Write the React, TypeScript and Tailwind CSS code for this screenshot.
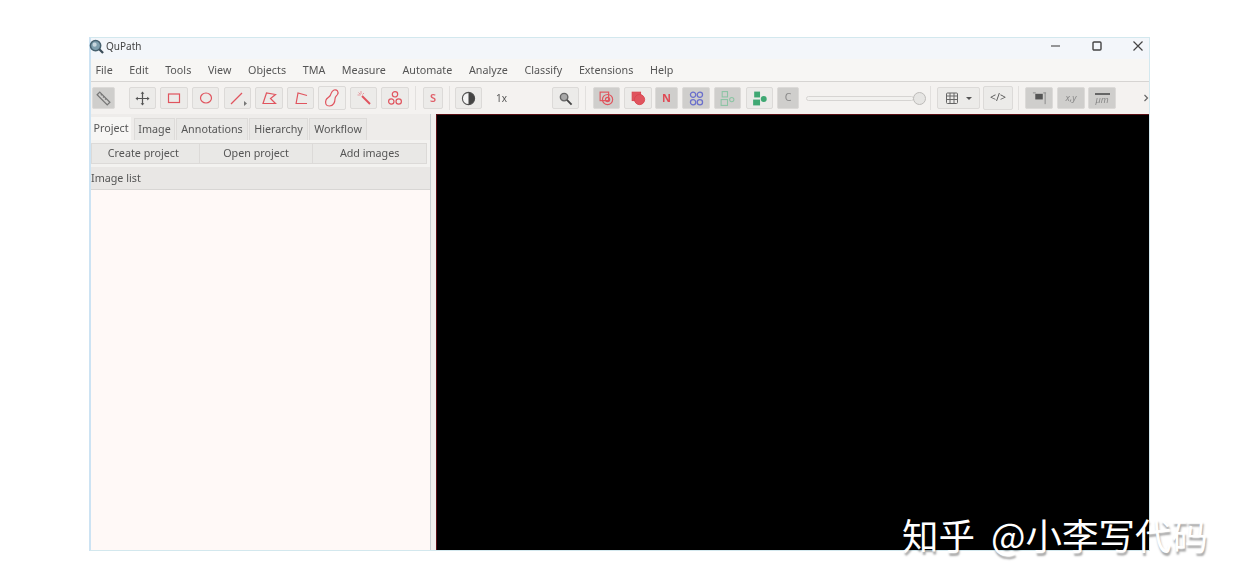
import type { ReactNode } from 'react';

const RED = '#e0545e';

interface ToolButtonProps {
  className?: string;
  selected?: boolean;
  children: ReactNode;
}

function ToolButton({ className = '', selected = false, children }: ToolButtonProps) {
  return (
    <div
      className={`flex h-[22px] shrink-0 items-center justify-center rounded-[2px] border border-[#dcdad8] ${
        selected ? 'bg-[#cfcecc]' : 'bg-[#ecebe9]'
      } ${className}`}
    >
      {children}
    </div>
  );
}

function Glyph({ children, size = 16 }: { children: ReactNode; size?: number }) {
  return (
    <svg width={size} height={size} viewBox="0 0 16 16" fill="none" stroke={RED} strokeWidth="1.2">
      {children}
    </svg>
  );
}

function Divider({ className = '' }: { className?: string }) {
  return <div className={`h-[24px] w-px shrink-0 bg-[#e2e0de] ${className}`} />;
}

const menus = [
  'File',
  'Edit',
  'Tools',
  'View',
  'Objects',
  'TMA',
  'Measure',
  'Automate',
  'Analyze',
  'Classify',
  'Extensions',
  'Help',
];

export default function App() {
  return (
    <div className="relative h-[588px] w-[1239px] overflow-hidden bg-white pl-[89px] pt-[37px] font-['Noto_Sans','Open_Sans',sans-serif] text-[10.75px] text-[#555]">
      {/* Window */}
      <div className="flex h-[514px] w-[1061px] flex-col border-y border-l-2 border-r border-[#d3e8ee] border-l-[#cde3f3] bg-[#f4f2f0] blur-[0.35px]">
        {/* Title bar */}
        <div className="flex h-[21px] shrink-0 items-start bg-[#f3f6fa] pr-[5px] pt-[1px]">
          <svg width="15" height="15" viewBox="0 0 16 16" className="ml-[-2px]">
            <circle cx="7" cy="7" r="5.5" fill="#7f9fae" stroke="#46606e" strokeWidth="1.6" />
            <circle cx="6" cy="6" r="2.2" fill="#c9d8df" />
            <path d="M11 11l4 4" stroke="#3a4c58" strokeWidth="2.4" />
          </svg>
          <span className="ml-[2px] text-[10px] leading-[14px] text-[#444]">QuPath</span>
          <div className="ml-auto flex items-center pt-[1px]">
            <svg width="12" height="12" viewBox="0 0 12 12" stroke="#555" strokeWidth="1.2">
              <path d="M1 6h9" />
            </svg>
            <svg width="12" height="12" viewBox="0 0 12 12" fill="none" stroke="#444" strokeWidth="1.4" className="ml-[29px]">
              <rect x="2" y="2" width="8" height="8" rx="1" />
            </svg>
            <svg width="12" height="12" viewBox="0 0 12 12" stroke="#444" strokeWidth="1.2" className="ml-[29px]">
              <path d="M1.5 1.5l9 9M10.5 1.5l-9 9" />
            </svg>
          </div>
        </div>

        {/* Menu bar */}
        <div className="flex h-[23px] shrink-0 items-center gap-[16.6px] border-b border-[#d6d4d2] bg-[#f7f6f4] pl-[4.5px]">
          {menus.map((menu) => (
            <span key={menu}>{menu}</span>
          ))}
        </div>

        {/* Toolbar */}
        <div className="flex h-[32px] shrink-0 items-center bg-[#f4f2f0] pl-[1px]">
          <ToolButton selected className="w-[23px]">
            <svg width="17" height="17" viewBox="0 0 16 16" fill="none" stroke="#777" strokeWidth="1.2">
              <path d="M4.5 2L14 11.5 11.5 14 2 4.500z" />
              <path d="M6.500 4l-1 1M8.500 6l-1 1M10.500 8l-1 1" />
            </svg>
          </ToolButton>
          <ToolButton className="ml-[14px] w-[27px]">
            <svg width="15" height="15" viewBox="0 0 16 16" fill="#555" stroke="#555" strokeWidth="1.300">
              <path d="M8 2v12M2 8h12" />
              <path d="M8 0.500l2 2.500H6zM8 15.500l2-2.500H6zM0.500 8L3 6v4zM15.500 8L13 6v4z" strokeWidth="0" />
            </svg>
          </ToolButton>
          <ToolButton className="ml-[4px] w-[28px]">
            <Glyph>
              <rect x="2.500" y="4" width="11" height="8.500" />
            </Glyph>
          </ToolButton>
          <ToolButton className="ml-[4px] w-[27px]">
            <Glyph>
              <ellipse cx="8" cy="8" rx="5.500" ry="5" />
            </Glyph>
          </ToolButton>
          <ToolButton className="ml-[5px] w-[27px]">
            <svg width="22" height="18" viewBox="0 0 22 18" fill="none">
              <path d="M4 15L15 4" stroke={RED} strokeWidth="1.200" />
              <path d="M17 12l3 2.500-3 2.500z" fill="#777" />
            </svg>
          </ToolButton>
          <ToolButton className="ml-[4px] w-[28px]">
            <Glyph>
              <path d="M2 13.500L5.500 3l9 1.500-5 4 5 5z" />
            </Glyph>
          </ToolButton>
          <ToolButton className="ml-[4px] w-[27px]">
            <Glyph>
              <path d="M3 14L5 3l9 2.500M3 13.500h11" />
            </Glyph>
          </ToolButton>
          <ToolButton className="ml-[4px] h-[24px] w-[28px] border-[#d4d2d0] bg-[#f0efed]">
            <svg width="18" height="20" viewBox="0 0 18 20" fill="none" stroke={RED} strokeWidth="1.200">
              <path d="M11 2c3-1 5 2 3.500 4.500-1 1.500-2.500 2-2.500 4.500 0 3-1.500 7-5.500 7S2 15 3 12c1-2.500 3.500-2.500 4.500-5S8.500 3 11 2z" />
            </svg>
          </ToolButton>
          <ToolButton className="ml-[4px] w-[27px]">
            <svg width="16" height="16" viewBox="0 0 16 16" fill="none">
              <path d="M6 6l8 8" stroke={RED} strokeWidth="2" />
              <path d="M5 1v3M1.500 5h3M2.500 2.500l2 2M8 3L6.500 4.500" stroke="#e59aa0" strokeWidth="1" />
            </svg>
          </ToolButton>
          <ToolButton className="ml-[4px] w-[28px]">
            <Glyph>
              <circle cx="8" cy="4.300" r="2.700" />
              <circle cx="4.300" cy="11.500" r="2.700" />
              <circle cx="11.700" cy="11.500" r="2.700" />
            </Glyph>
          </ToolButton>
          <Divider className="ml-[6px]" />
          <ToolButton className="ml-[7px] w-[20px]">
            <span className="text-[11px] font-semibold text-[#e0606a]">S</span>
          </ToolButton>
          <Divider className="ml-[6px]" />
          <ToolButton className="ml-[5px] w-[27px]">
            <svg width="15" height="15" viewBox="0 0 16 16">
              <circle cx="8" cy="8" r="6.500" fill="#f4f4f4" stroke="#555" strokeWidth="1.200" />
              <path d="M8 1.500a6.500 6.500 0 0 1 0 13z" fill="#444" />
            </svg>
          </ToolButton>
          <span className="ml-[14px] w-[12px] text-[10px]">1x</span>
          <ToolButton className="ml-[44px] w-[27px]">
            <svg width="15" height="15" viewBox="0 0 16 16" fill="none">
              <circle cx="6.500" cy="6.500" r="4" fill="#a8a8a8" stroke="#666" strokeWidth="1.500" />
              <path d="M9.500 9.500l5 5" stroke="#444" strokeWidth="2" />
            </svg>
          </ToolButton>
          <Divider className="ml-[6px]" />
          <ToolButton selected className="ml-[7px] w-[27px]">
            <svg width="17" height="17" viewBox="0 0 16 16" fill="none" stroke={RED} strokeWidth="1.100">
              <rect x="2" y="2" width="8" height="8" />
              <circle cx="9" cy="9" r="4.800" />
              <circle cx="9" cy="9" r="2" />
            </svg>
          </ToolButton>
          <ToolButton className="ml-[4px] w-[28px]">
            <svg width="17" height="17" viewBox="0 0 16 16" fill={RED} stroke="#d9434e" strokeWidth="0.800">
              <rect x="2" y="2" width="8" height="8" />
              <circle cx="9" cy="9" r="4.800" />
            </svg>
          </ToolButton>
          <ToolButton selected className="ml-[3px] w-[23px]">
            <span className="text-[11px] font-bold text-[#e04a55]">N</span>
          </ToolButton>
          <ToolButton selected className="ml-[4px] w-[28px]">
            <svg width="17" height="17" viewBox="0 0 16 16" fill="none" stroke="#6a6fcc" strokeWidth="1.200">
              <circle cx="4.800" cy="4.500" r="2.500" />
              <circle cx="11.200" cy="4.500" r="2.500" />
              <circle cx="4.800" cy="11.500" r="2.500" />
              <circle cx="11.200" cy="11.500" r="2.500" />
            </svg>
          </ToolButton>
          <ToolButton selected className="ml-[4px] w-[27px]">
            <svg width="17" height="17" viewBox="0 0 16 16" fill="none" stroke="#8cc4a4" strokeWidth="1">
              <rect x="3" y="1.500" width="5" height="5" />
              <rect x="2" y="9" width="6" height="5.500" />
              <circle cx="12" cy="9" r="2" />
            </svg>
          </ToolButton>
          <ToolButton className="ml-[5px] w-[27px]">
            <svg width="17" height="17" viewBox="0 0 16 16" fill="#3fa873">
              <rect x="3" y="1.500" width="5.500" height="5.500" />
              <rect x="2" y="9" width="6.500" height="5.500" />
              <circle cx="12" cy="8.500" r="2.800" />
            </svg>
          </ToolButton>
          <ToolButton selected className="ml-[4px] w-[22px]">
            <span className="text-[10.5px] text-[#888]">C</span>
          </ToolButton>

          {/* Opacity slider */}
          <div className="ml-[7px] flex w-[120px] shrink-0 items-center">
            <div className="h-[5px] flex-1 rounded-full border border-[#d6d4d2] bg-[#f2f1ef]" />
            <div className="ml-[-1px] size-[13px] rounded-full border border-[#bdbbb9] bg-[#e6e5e3]" />
          </div>

          <Divider className="ml-[4px]" />
          <ToolButton className="ml-[6px] w-[43px] gap-[7px]">
            <svg width="14" height="14" viewBox="0 0 14 14" fill="none" stroke="#666" strokeWidth="1">
              <rect x="1.500" y="2" width="11" height="10.500" rx="1" />
              <path d="M1.500 5h11M1.500 8.500h11M5 2v10.500M9 2v10.500" />
            </svg>
            <span className="h-0 w-0 border-x-[3px] border-t-[3px] border-x-transparent border-t-[#555]" />
          </ToolButton>
          <ToolButton className="ml-[3px] h-[24px] w-[30px]">
            <span className="text-[10.5px] text-[#555]">&lt;/&gt;</span>
          </ToolButton>
          <Divider className="ml-[5px]" />
          <ToolButton selected className="ml-[6px] w-[28px]">
            <svg width="15" height="15" viewBox="0 0 16 16" fill="none">
              <rect x="3.500" y="3" width="8" height="6" fill="#555" />
              <path d="M1 2h3M12 2h3M14 2v12" stroke="#888" strokeWidth="1" />
            </svg>
          </ToolButton>
          <ToolButton selected className="ml-[4px] w-[28px]">
            <span className="text-[9px] italic text-[#888]">x,y</span>
          </ToolButton>
          <ToolButton selected className="ml-[3px] w-[28px]">
            <div className="flex flex-col items-center leading-[9px]">
              <div className="h-[2px] w-[15px] bg-[#666]" />
              <span className="text-[9px] italic text-[#888]">µm</span>
            </div>
          </ToolButton>
          <svg width="6" height="8" viewBox="0 0 6 8" fill="none" stroke="#666" strokeWidth="1.200" className="ml-auto">
            <path d="M1.500 1l3 3-3 3" />
          </svg>
        </div>

        {/* Body */}
        <div className="flex min-h-0 flex-1">
          {/* Left panel */}
          <div className="flex w-[340px] shrink-0 flex-col border-r border-[#c9cfd0] bg-[#eeecea]">
            <div className="flex h-[26px] shrink-0 items-end gap-px text-center">
              <div className="flex h-[23px] w-[40px] items-center justify-center bg-[#f7f6f4] pb-[1px]">Project</div>
              <div className="ml-[2px] flex h-[22px] w-[41px] items-center justify-center border border-b-0 border-[#dddbd9] bg-[#e9e8e6]">Image</div>
              <div className="flex h-[22px] w-[72px] items-center justify-center border border-b-0 border-[#dddbd9] bg-[#e9e8e6]">Annotations</div>
              <div className="flex h-[22px] w-[59px] items-center justify-center border border-b-0 border-[#dddbd9] bg-[#e9e8e6]">Hierarchy</div>
              <div className="flex h-[22px] w-[58px] items-center justify-center border border-b-0 border-[#dddbd9] bg-[#e9e8e6]">Workflow</div>
            </div>
            <div className="flex h-[27px] shrink-0 items-center bg-[#f3f2f0] pr-[3px]">
              <div className="flex h-[21px] w-[109px] items-center justify-center border border-[#dcdad8] bg-[#e9e8e6] pr-[4px]">Create project</div>
              <div className="flex h-[21px] w-[114px] items-center justify-center border border-l-0 border-[#dcdad8] bg-[#e9e8e6]">Open project</div>
              <div className="flex h-[21px] w-[114px] items-center justify-center border border-l-0 border-[#dcdad8] bg-[#e9e8e6]">Add images</div>
            </div>
            <div className="flex h-[23px] shrink-0 items-center border-b border-[#d8d6d4] bg-[#e9e7e5]">Image list</div>
            <div className="flex-1 bg-[#fff9f7]" />
          </div>
          {/* Splitter */}
          <div className="w-[5px] shrink-0 bg-[#f0eeec]" />
          {/* Viewer */}
          <div className="flex-1 border-l border-t border-[#5a1015] bg-black" />
        </div>
      </div>

      {/* Watermark */}
      <div className="absolute left-[902px] top-[512px] flex gap-[16px] whitespace-nowrap font-['Noto_Sans_CJK_SC',sans-serif] text-[36.5px] leading-[46px] text-white [text-shadow:1px_3px_2px_rgba(0,0,0,0.35)]">
        <span>知乎</span>
        <span>@小李写代码</span>
      </div>
    </div>
  );
}
